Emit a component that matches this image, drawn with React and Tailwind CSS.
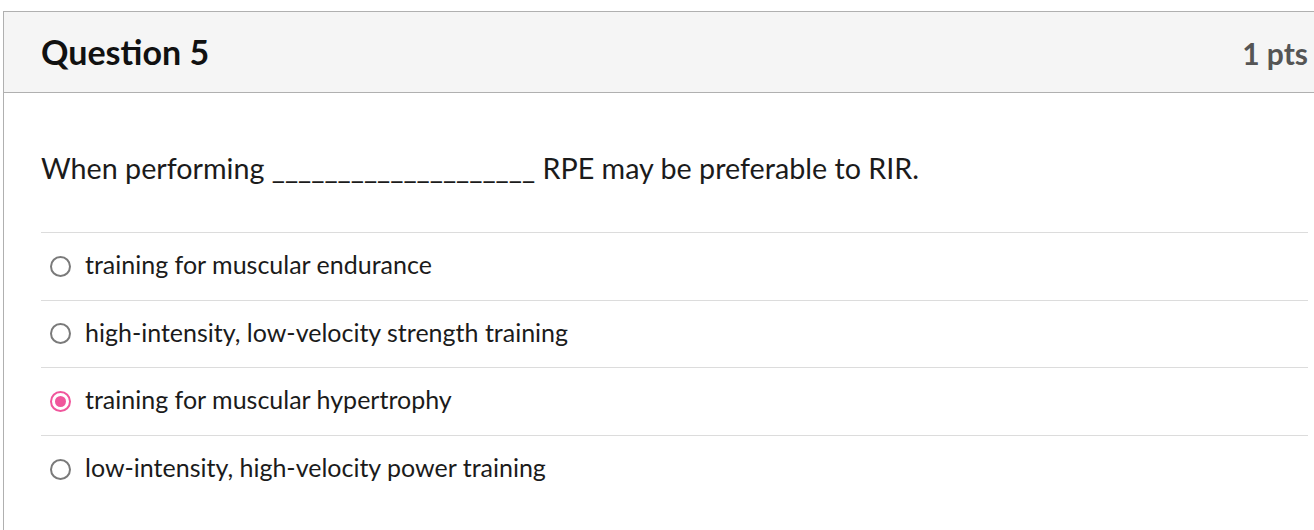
const options = [
  { text: "training for muscular endurance", checked: false },
  { text: "high-intensity, low-velocity strength training", checked: false },
  { text: "training for muscular hypertrophy", checked: true },
  { text: "low-intensity, high-velocity power training", checked: false },
];

function Radio({ checked }) {
  if (checked) {
    return (
      <span className="w-[21px] h-[21px] rounded-full border-[2px] border-[#f0569c] flex items-center justify-center shrink-0">
        <span className="w-[11px] h-[11px] rounded-full bg-[#f0569c]" />
      </span>
    );
  }
  return (
    <span className="w-[21px] h-[21px] rounded-full border-[2px] border-[#7a7a7a] shrink-0" />
  );
}

export default function App() {
  return (
    <div
      className="w-[1314px] h-[530px] overflow-hidden bg-white pt-[11px] pl-[3px]"
      style={{ fontFamily: "Lato, 'Noto Sans', sans-serif" }}
    >
      <div className="w-[1343px] border border-[#b0b0b0] bg-white">
        {/* header */}
        <div className="h-[81px] bg-[#f5f5f5] border-b border-[#b0b0b0] flex items-center justify-between px-[37px]">
          <h2 className="text-[34px] font-bold text-[#111] leading-[40px]">Question 5</h2>
          <span className="text-[30px] font-bold text-[#555] leading-[40px] pt-[2px]">1 pts</span>
        </div>

        {/* body */}
        <div className="px-[37px] pt-[57px] h-[500px]">
          <p className="text-[28.7px] text-[#1b1b1b] leading-[36px]">
            When performing ____________________ RPE may be preferable to RIR.
          </p>
          <div className="mt-[46px] border-t border-[#dcdcdc] divide-y divide-[#dcdcdc]">
            {options.map((o) => (
              <label
                key={o.text}
                className="flex items-center h-[67.5px] pl-[9px] gap-[14px]"
              >
                <Radio checked={o.checked} />
                <span className="text-[25px] text-[#1b1b1b] leading-[30px] -translate-y-[2px]">{o.text}</span>
              </label>
            ))}
          </div>
        </div>
      </div>
    </div>
  );
}
